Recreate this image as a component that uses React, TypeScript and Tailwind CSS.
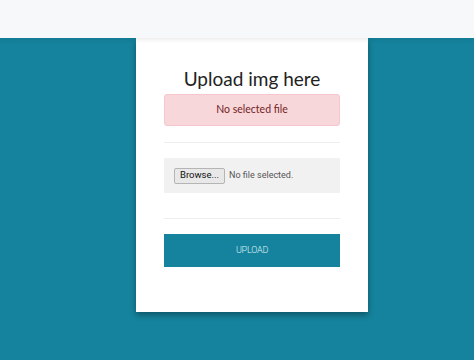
export default function App() {
  return (
    <div className="w-[474px] h-[360px] bg-[#15839d] flex flex-col overflow-hidden">
      <div className="h-[38px] shrink-0 bg-[#f7f8fa] shadow-[0_2px_4px_rgba(0,0,0,0.08)] relative z-10" />
      <div className="ml-[136px] w-[232px] h-[274px] bg-white shadow-[0_3px_6px_rgba(0,0,0,0.35)] px-[28px] pt-[28px]">
        <h1 className="text-center text-[19px] leading-[26px] text-[#222] font-['Lato',sans-serif]">
          Upload img here
        </h1>
        <div className="mt-[2px] h-[32px] rounded-[3px] border border-[#f5c6cb] bg-[#f8d7da] flex items-center justify-center text-[10.5px] text-[#721c24] font-['Lato',sans-serif]">
          No selected file
        </div>
        <hr className="mt-[16px] border-t border-[#eeeeee]" />
        <div className="mt-[15px] h-[35px] bg-[#f1f1f1] flex items-center pl-[10px] gap-[4px] font-['Roboto',sans-serif] text-[9.5px]">
          <span className="h-[16px] px-[5px] border border-[#b5b5b5] bg-[#e8e8e8] rounded-[2px] flex items-center text-[#111]">
            Browse...
          </span>
          <span className="text-[#555] text-[9px]">No file selected.</span>
        </div>
        <hr className="mt-[25px] border-t border-[#eeeeee]" />
        <button className="mt-[15px] w-full h-[33px] bg-[#15839d] text-[#dff1f5] text-[9px] font-light tracking-[-0.2px] font-['Roboto',sans-serif]">
          UPLOAD
        </button>
      </div>
    </div>
  );
}
